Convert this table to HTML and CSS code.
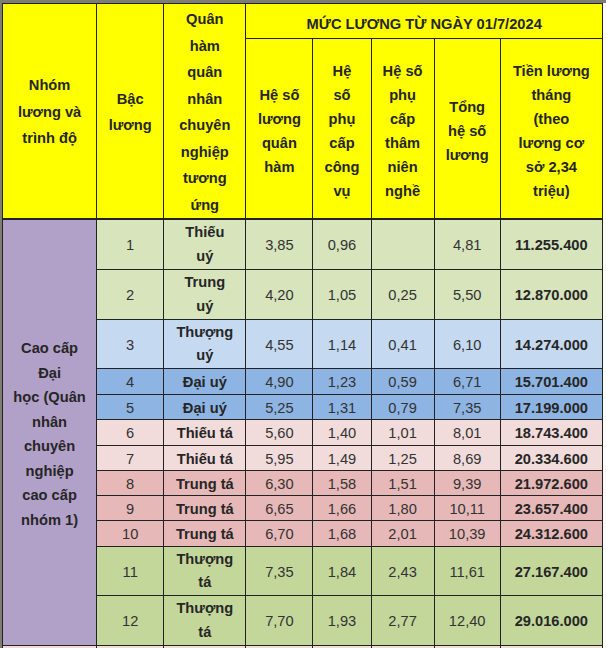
FILE: index.html
```html
<!DOCTYPE html>
<html lang="vi">
<head>
<meta charset="utf-8">
<title>Mức lương từ ngày 01/7/2024</title>
<link rel="stylesheet" href="styles.css">
</head>
<body>
<div class="frame">
<table class="salary">
<colgroup>
<col class="c-group"><col class="c-step"><col class="c-rank"><col class="c-base"><col class="c-duty"><col class="c-senior"><col class="c-total"><col class="c-money">
</colgroup>
<thead>
<tr class="hr1">
<th rowspan="2" class="hspan">Nhóm<br>lương và<br>trình độ</th>
<th rowspan="2" class="hspan">Bậc<br>lương</th>
<th rowspan="2" class="hspan">Quân<br>hàm<br>quân<br>nhân<br>chuyên<br>nghiệp<br>tương<br>ứng</th>
<th colspan="5" class="htitle">MỨC LƯƠNG TỪ NGÀY 01/7/2024</th>
</tr>
<tr class="hr2">
<th>Hệ số<br>lương<br>quân<br>hàm</th>
<th>Hệ<br>số<br>phụ<br>cấp<br>công<br>vụ</th>
<th>Hệ số<br>phụ<br>cấp<br>thâm<br>niên<br>nghề</th>
<th>Tổng<br>hệ số<br>lương</th>
<th>Tiền lương<br>tháng<br>(theo<br>lương cơ<br>sở 2,34<br>triệu)</th>
</tr>
</thead>
<tbody>
<tr class="tall g1 r50">
<td rowspan="12" class="group">Cao cấp<br>Đại<br>học (Quân<br>nhân<br>chuyên<br>nghiệp<br>cao cấp<br>nhóm 1)</td>
<td>1</td><td class="rank">Thiếu<br>uý</td><td>3,85</td><td>0,96</td><td></td><td>4,81</td><td class="money">11.255.400</td>
</tr>
<tr class="tall g1 r50">
<td>2</td><td class="rank">Trung<br>uý</td><td>4,20</td><td>1,05</td><td>0,25</td><td>5,50</td><td class="money">12.870.000</td>
</tr>
<tr class="tall b1 r49">
<td>3</td><td class="rank">Thượng<br>uý</td><td>4,55</td><td>1,14</td><td>0,41</td><td>6,10</td><td class="money">14.274.000</td>
</tr>
<tr class="b2 r26">
<td>4</td><td class="rank">Đại uý</td><td>4,90</td><td>1,23</td><td>0,59</td><td>6,71</td><td class="money">15.701.400</td>
</tr>
<tr class="b2 r25">
<td>5</td><td class="rank">Đại uý</td><td>5,25</td><td>1,31</td><td>0,79</td><td>7,35</td><td class="money">17.199.000</td>
</tr>
<tr class="p1 r26">
<td>6</td><td class="rank">Thiếu tá</td><td>5,60</td><td>1,40</td><td>1,01</td><td>8,01</td><td class="money">18.743.400</td>
</tr>
<tr class="p1 r25">
<td>7</td><td class="rank">Thiếu tá</td><td>5,95</td><td>1,49</td><td>1,25</td><td>8,69</td><td class="money">20.334.600</td>
</tr>
<tr class="p2 r25">
<td>8</td><td class="rank">Trung tá</td><td>6,30</td><td>1,58</td><td>1,51</td><td>9,39</td><td class="money">21.972.600</td>
</tr>
<tr class="p2 r25">
<td>9</td><td class="rank">Trung tá</td><td>6,65</td><td>1,66</td><td>1,80</td><td>10,11</td><td class="money">23.657.400</td>
</tr>
<tr class="p2 r26">
<td>10</td><td class="rank">Trung tá</td><td>6,70</td><td>1,68</td><td>2,01</td><td>10,39</td><td class="money">24.312.600</td>
</tr>
<tr class="tall g2 r49">
<td>11</td><td class="rank">Thượng<br>tá</td><td>7,35</td><td>1,84</td><td>2,43</td><td>11,61</td><td class="money">27.167.400</td>
</tr>
<tr class="tall g2 r50">
<td>12</td><td class="rank">Thượng<br>tá</td><td>7,70</td><td>1,93</td><td>2,77</td><td>12,40</td><td class="money">29.016.000</td>
</tr>
<tr class="p1 r25">
<td class="next"></td><td></td><td></td><td></td><td></td><td></td><td></td><td></td>
</tr>
</tbody>
</table>
</div>
</body>
</html>
```

FILE: styles.css
```css
html, body {
  margin: 0;
  padding: 0;
  background: #ffffff;
}

.frame {
  border-top: 3px solid #7d7d70;
  border-left: 2px solid #7d7d70;
}

.salary {
  border-collapse: collapse;
  table-layout: fixed;
  width: 601px;
  font-family: "Liberation Sans", Arial, sans-serif;
  font-size: 14.667px;
  color: #333333;
}

.c-group { width: 94px; }
.c-step { width: 67px; }
.c-rank { width: 82px; }
.c-base { width: 67px; }
.c-duty { width: 58px; }
.c-senior { width: 63px; }
.c-total { width: 66px; }
.c-money { width: 102px; }

.salary th,
.salary td {
  border: 1px solid #222222;
  padding: 0;
  text-align: center;
  vertical-align: middle;
  white-space: nowrap;
}

.salary th {
  background: #ffff00;
  font-weight: bold;
  color: #262626;
  line-height: 24px;
  padding-top: 5px;
}

.salary thead tr.hr2 th,
.salary th.hspan {
  border-bottom: 2px solid #222222;
}

.salary th.hspan {
  line-height: 26.5px;
  padding-top: 2px;
}

.hr1 { height: 35px; }
.hr2 { height: 179px; }

.salary th.htitle {
  line-height: 20px;
}

.salary td {
  line-height: 22px;
  padding-top: 2px;
}

.salary .tall td.rank {
  line-height: 23.5px;
  padding-top: 1px;
}

.salary td.group {
  background: #b1a0c7;
  font-weight: bold;
  color: #262626;
  line-height: 24.5px;
  padding-top: 4px;
}

.salary td.rank,
.salary td.money {
  font-weight: bold;
  color: #262626;
}

.r50 { height: 50px; }
.r49 { height: 49px; }
.r26 { height: 26px; }
.r25 { height: 25px; }

.g1 td { background: #d7e4bc; }
.b1 td { background: #c5d9f1; }
.b2 td { background: #8db4e2; }
.p1 td { background: #f2dcdb; }
.p2 td { background: #e6b8b7; }
.g2 td { background: #c4d79b; }
```
